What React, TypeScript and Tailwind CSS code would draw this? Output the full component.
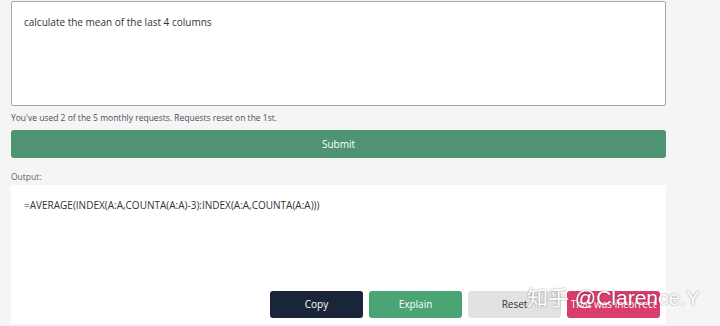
import React from "react";

type BtnProps = { label: string; className: string };

const ActionButton = ({ label, className }: BtnProps) => (
  <button
    className={`w-[93px] h-[27px] rounded-[3px] text-[10px] font-medium flex items-center justify-center whitespace-nowrap ${className}`}
  >
    {label}
  </button>
);

export default function App() {
  return (
    <div className="relative w-[720px] h-[326px] overflow-hidden bg-[#f5f5f5] pl-[11px] pt-[1px] font-['Open_Sans','Liberation_Sans',sans-serif]">
      <div className="w-[655px] flex flex-col">
        <div className="h-[105px] bg-white border border-[#a6a6a6] rounded-[2px] px-[12px] pt-[13px] text-[10px] text-[#333]">
          calculate the mean of the last 4 columns
        </div>
        <p className="mt-[6px] text-[8.5px] text-[#4b5060] leading-[12px]">
          You've used 2 of the 5 monthly requests. Requests reset on the 1st.
        </p>
        <button className="mt-[6px] h-[28px] rounded-[3px] bg-[#4e9470] text-white text-[10px] font-medium">
          Submit
        </button>
        <p className="mt-[13px] text-[8.5px] text-[#666] leading-[12px]">Output:</p>
        <div className="mt-[2px] h-[139px] bg-white flex flex-col pl-[13px] pr-[6px] pt-[13px] pb-[6px]">
          <div className="text-[10px] text-[#333] leading-[14px]">
            =AVERAGE(INDEX(A:A,COUNTA(A:A)-3):INDEX(A:A,COUNTA(A:A)))
          </div>
          <div className="mt-auto flex justify-end gap-[6px]">
            <ActionButton label="Copy" className="bg-[#1a2539] text-white" />
            <ActionButton label="Explain" className="bg-[#4aa473] text-white" />
            <ActionButton label="Reset" className="bg-[#e2e2e2] text-[#333]" />
            <ActionButton label="That was incorrect" className="bg-[#d93d6b] text-white" />
          </div>
        </div>
      </div>
      <div
        className="absolute left-[527px] top-[285px] whitespace-nowrap text-[21px] leading-[26px] text-white [text-shadow:0_0_2px_rgba(0,0,0,0.45)]"
        style={{ fontFamily: "'Liberation Sans', 'Noto Sans CJK SC', sans-serif" }}
      >
        知乎 @Clarence.Y
      </div>
    </div>
  );
}
